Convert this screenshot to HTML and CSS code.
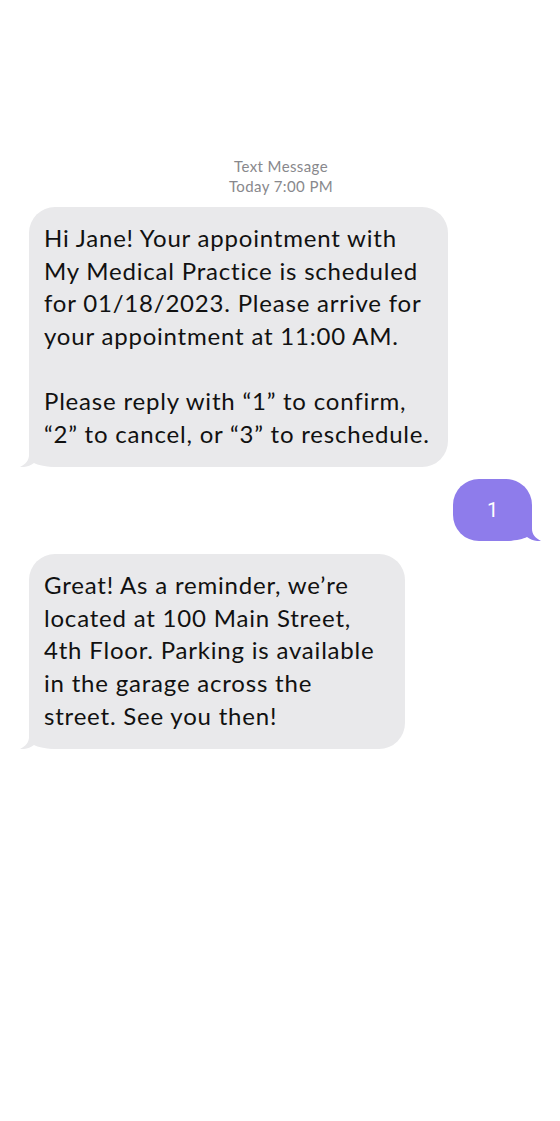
FILE: index.html
```html
<!DOCTYPE html>
<html lang="en">
<head>
    <meta charset="UTF-8">
    <meta name="viewport" content="width=device-width, initial-scale=1.0">
    <title>Text Message</title>
    <link rel="stylesheet" href="styles.css">
</head>
<body>
    <div class="thread">
        <div class="stamp">
            <div>Text Message</div>
            <div>Today 7:00 PM</div>
        </div>

        <div class="bubble incoming wide">
            <p>Hi Jane! Your appointment with My Medical Practice is scheduled for 01/18/2023. Please arrive for your appointment at 11:00 AM.</p>
            <p>Please reply with “1” to confirm, “2” to cancel, or “3” to reschedule.</p>
            <svg class="tail" width="34" height="30" viewBox="0 0 34 30"><path d="M9 0 L9 18 C9 23 6 27 0 30 C5 30.5 10 29 14 26 C18 28 24 29.5 34 30 L34 0 Z"/></svg>
        </div>

        <div class="bubble outgoing">
            <p>1</p>
            <svg class="tail" width="34" height="30" viewBox="0 0 34 30"><path d="M9 0 L9 18 C9 23 6 27 0 30 C5 30.5 10 29 14 26 C18 28 24 29.5 34 30 L34 0 Z"/></svg>
        </div>

        <div class="bubble incoming narrow">
            <p>Great! As a reminder, we’re located at 100 Main Street, 4th Floor. Parking is available in the garage across the street. See you then!</p>
            <svg class="tail" width="34" height="30" viewBox="0 0 34 30"><path d="M9 0 L9 18 C9 23 6 27 0 30 C5 30.5 10 29 14 26 C18 28 24 29.5 34 30 L34 0 Z"/></svg>
        </div>
    </div>
</body>
</html>
```

FILE: styles.css
```css
body {
    margin: 0;
    background: #ffffff;
    font-family: Lato, "Liberation Sans", sans-serif;
}
.thread {
    display: flex;
    flex-direction: column;
    gap: 12px;
    padding: 156px 28px 0 29px;
}
.stamp {
    align-self: center;
    margin-left: 1px;
    margin-bottom: -1px;
    text-align: center;
    font-size: 15px;
    letter-spacing: 0.4px;
    line-height: 20px;
    color: #88888c;
}
.bubble {
    position: relative;
    border-radius: 26px;
}
.bubble p {
    position: relative;
    z-index: 1;
    margin: 0;
}
.incoming {
    align-self: flex-start;
    box-sizing: border-box;
    padding: 15px 16px 17px 15px;
    background: #e9e9eb;
    color: #111111;
    font-size: 24px;
    letter-spacing: 0.8px;
    line-height: 32.6px;
}
.incoming p + p {
    margin-top: 32.6px;
}
.incoming .tail {
    position: absolute;
    left: -9px;
    bottom: 0;
    fill: #e9e9eb;
}
.wide {
    width: 419px;
}
.narrow {
    width: 376px;
    padding-right: 20px;
}
.outgoing {
    align-self: flex-end;
    width: 79px;
    height: 62px;
    margin-bottom: 1px;
    display: flex;
    align-items: center;
    justify-content: center;
    background: #8e7ceb;
    color: #ffffff;
    font-family: Roboto, sans-serif;
    font-size: 20px;
}
.outgoing .tail {
    position: absolute;
    right: -9px;
    bottom: 0;
    fill: #8e7ceb;
    transform: scaleX(-1);
}
```
